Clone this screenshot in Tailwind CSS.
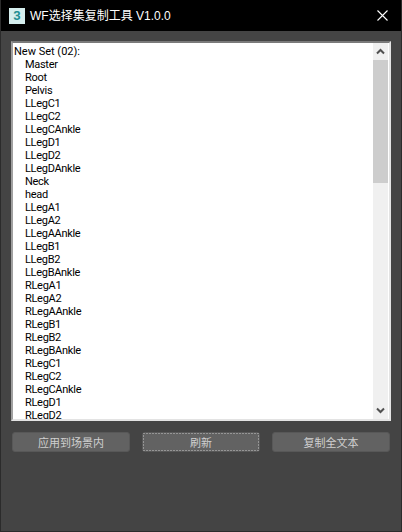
<!DOCTYPE html>
<html lang="en">
<head>
  <meta charset="UTF-8" />
  <title>WF选择集复制工具</title>
  <script src="https://cdn.jsdelivr.net/npm/@tailwindcss/browser@4"></script>
</head>
<body class="w-[402px] h-[532px] overflow-hidden bg-[#444444] font-['Roboto','Noto_Sans_CJK_SC',sans-serif] text-[11px]">
  <div class="w-[402px] h-[532px] flex flex-col border border-[#2b2b2b] border-t-0">
    <header class="h-[31px] bg-black flex items-center pl-[8px] pr-[13px] shrink-0">
      <div class="w-4 h-4 bg-[#d5eeee] flex items-center justify-center text-[#1f8f93] text-[13px] font-bold leading-none">3</div>
      <span class="ml-[5px] text-white text-[12px] flex-1 font-['Liberation_Sans','Noto_Sans_CJK_SC',sans-serif]">WF选择集复制工具 V1.0.0</span>
      <svg width="11" height="11" viewBox="0 0 11 11" fill="none" stroke="#ffffff" stroke-width="1.1"><path d="M0.5 0.5L10.5 10.5M10.5 0.5L0.5 10.5" /></svg>
    </header>

    <main class="flex-1 flex flex-col px-[10px] pt-[10px]">
      <div class="h-[380px] w-[380px] bg-white border-2 border-[#e3e3e3] border-t-[#7a7a7a] border-l-[#a0a0a0] flex overflow-hidden">
        <div class="flex-1 pl-px pt-[2px] text-black text-[11px] leading-[13px] overflow-hidden">
          <div>New Set (02):</div>
          <div class="pl-[11px] tracking-[-0.3px]">
            <div>Master</div>
            <div>Root</div>
            <div>Pelvis</div>
            <div>LLegC1</div>
            <div>LLegC2</div>
            <div>LLegCAnkle</div>
            <div>LLegD1</div>
            <div>LLegD2</div>
            <div>LLegDAnkle</div>
            <div>Neck</div>
            <div>head</div>
            <div>LLegA1</div>
            <div>LLegA2</div>
            <div>LLegAAnkle</div>
            <div>LLegB1</div>
            <div>LLegB2</div>
            <div>LLegBAnkle</div>
            <div>RLegA1</div>
            <div>RLegA2</div>
            <div>RLegAAnkle</div>
            <div>RLegB1</div>
            <div>RLegB2</div>
            <div>RLegBAnkle</div>
            <div>RLegC1</div>
            <div>RLegC2</div>
            <div>RLegCAnkle</div>
            <div>RLegD1</div>
            <div>RLegD2</div>
          </div>
        </div>
        <div class="w-[15px] mr-px bg-[#f0f0f0] flex flex-col">
          <div class="h-[17px] flex items-center justify-center">
            <svg width="9" height="7" viewBox="0 0 9 7" fill="none" stroke="#505050" stroke-width="2"><path d="M1 5.5L4.5 2L8 5.5" /></svg>
          </div>
          <div class="h-[123px] bg-[#cdcdcd]"></div>
          <div class="flex-1"></div>
          <div class="h-[17px] flex items-center justify-center">
            <svg width="9" height="7" viewBox="0 0 9 7" fill="none" stroke="#505050" stroke-width="2"><path d="M1 1.5L4.5 5L8 1.5" /></svg>
          </div>
        </div>
      </div>

      <div class="flex gap-[12px] mt-[11px] pl-px">
        <button class="w-[118px] h-[20px] rounded-[3px] bg-[#626262] border border-[#585858] text-[#d0d0d0] text-[11px] leading-none font-['Noto_Sans_CJK_SC',sans-serif]">应用到场景内</button>
        <button class="relative w-[118px] h-[20px] rounded-[3px] bg-[#626262] border border-[#585858] text-[#d0d0d0] text-[11px] leading-none font-['Noto_Sans_CJK_SC',sans-serif]">
          刷新
          <svg class="absolute left-0 top-0" width="116" height="18" fill="none" stroke="#c8c8c8"><rect x="0.5" y="0.5" width="115" height="17" stroke-dasharray="1 2" /></svg>
        </button>
        <button class="w-[118px] h-[20px] rounded-[3px] bg-[#626262] border border-[#585858] text-[#d0d0d0] text-[11px] leading-none font-['Noto_Sans_CJK_SC',sans-serif]">复制全文本</button>
      </div>
    </main>
  </div>
</body>
</html>
